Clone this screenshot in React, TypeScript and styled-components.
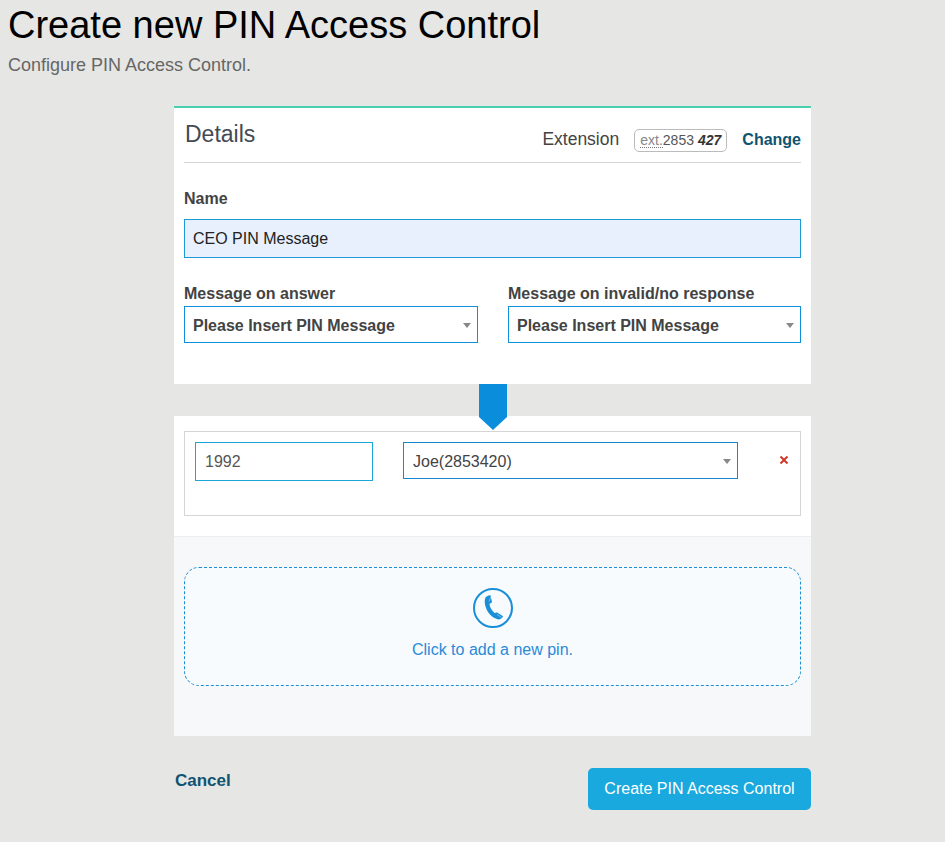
import { createGlobalStyle } from "styled-components";
import styled from "styled-components";

const GlobalStyle = createGlobalStyle`
  html, body {
    margin: 0;
    padding: 0;
    background: #e6e6e4;
    font-family: "Liberation Sans", Arial, sans-serif;
  }
`;

const Page = styled.div`
  width: 945px;
  height: 842px;
  overflow: hidden;
`;

const Header = styled.div`
  padding: 3px 8px 0;
`;

const Title = styled.h1`
  margin: 0;
  font-size: 38px;
  font-weight: 400;
  line-height: 44px;
  color: #000;
`;

const Subtitle = styled.p`
  margin: 8px 0 0;
  font-size: 18px;
  line-height: 21px;
  color: #666;
`;

const Column = styled.div`
  width: 637px;
  margin: 30px 0 0 174px;
`;

const DetailsCard = styled.section`
  height: 276px;
  padding: 0 10px;
  background: #fff;
  border-top: 2px solid #48cfae;
`;

const DetailsHead = styled.div`
  display: flex;
  align-items: center;
  justify-content: space-between;
  height: 54px;
  border-bottom: 1px solid #d5d5d5;
`;

const DetailsTitle = styled.h2`
  margin: 0 0 1px 1px;
  font-size: 23px;
  font-weight: 400;
  color: #434a54;
`;

const ExtensionGroup = styled.div`
  display: flex;
  align-items: center;
  margin-top: 9px;
`;

const ExtensionLabel = styled.span`
  font-size: 17.5px;
  color: #434343;
`;

const ExtensionBadge = styled.span`
  display: inline-flex;
  align-items: center;
  box-sizing: border-box;
  height: 23px;
  margin: 0 0 -1px 15px;
  padding: 0 5px 0 5px;
  border: 1px solid #bbb;
  border-radius: 5px;
  font-size: 14px;
  color: #555;
`;

const ExtPrefix = styled.span`
  color: #888;
  border-bottom: 1px dotted #777;
  line-height: 14px;
`;

const ExtNumber = styled.b`
  margin-left: 4px;
  font-style: italic;
  color: #333;
`;

const ChangeLink = styled.a`
  margin-left: 15px;
  font-size: 16px;
  font-weight: 700;
  color: #0f5470;
`;

const Field = styled.div`
  min-width: 0;
`;

const NameField = styled(Field)`
  margin-top: 27px;
`;

const Label = styled.label`
  display: block;
  font-size: 16px;
  font-weight: 700;
  line-height: 18px;
  color: #434343;
`;

const NameInput = styled.input`
  display: block;
  box-sizing: border-box;
  width: 100%;
  height: 39px;
  margin-top: 11px;
  padding: 0 8px;
  border: 1px solid #1c9ad6;
  border-radius: 0;
  outline: none;
  background: #e8f0fe;
  font: 16px "Liberation Sans", Arial, sans-serif;
  color: #222;
`;

const MessageRow = styled.div`
  display: grid;
  grid-template-columns: 294px 293px;
  column-gap: 30px;
  margin-top: 27px;
`;

const SelectBox = styled.div<{ $bold?: boolean; $height: number }>`
  display: flex;
  align-items: center;
  justify-content: space-between;
  box-sizing: border-box;
  height: ${(p) => p.$height}px;
  padding: 2px 6px 0 8px;
  border: 1px solid #0f8fdc;
  background: #fff;
  font-size: 16px;
  font-weight: ${(p) => (p.$bold ? 700 : 400)};
  color: #434343;
`;

const MessageSelect = styled(SelectBox)`
  margin-top: 3px;
`;

const Caret = styled.span`
  width: 0;
  height: 0;
  border-left: 4px solid transparent;
  border-right: 4px solid transparent;
  border-top: 5px solid #888;
`;

const PinsCard = styled.section`
  position: relative;
  margin-top: 32px;
  background: #fff;
`;

const Connector = styled.svg`
  position: absolute;
  left: 305px;
  top: -32px;
  display: block;
`;

const PinsList = styled.div`
  height: 120px;
  box-sizing: border-box;
  padding: 15px 10px 0;
`;

const PinRow = styled.div`
  display: flex;
  align-items: flex-start;
  box-sizing: border-box;
  height: 85px;
  padding: 10px 0 0 10px;
  border: 1px solid #d5d5d5;
`;

const PinInput = styled.input`
  display: block;
  box-sizing: border-box;
  width: 178px;
  height: 39px;
  padding: 0 9px;
  border: 1px solid #1ea5d8;
  border-radius: 0;
  outline: none;
  font: 16px "Liberation Sans", Arial, sans-serif;
  color: #555;
`;

const PinSelect = styled(SelectBox)`
  width: 335px;
  margin-left: 30px;
  padding-left: 9px;
  border-color: #1a86cf;
`;

const RemoveButton = styled.svg`
  margin: 13px 0 0 41px;
  display: block;
`;

const AddArea = styled.div`
  height: 200px;
  box-sizing: border-box;
  padding: 30px 10px 0;
  background: #f6f8f9;
  border-top: 1px solid #eceef0;
`;

const AddPin = styled.div`
  display: flex;
  flex-direction: column;
  align-items: center;
  box-sizing: border-box;
  height: 119px;
  padding-top: 20px;
  border: 1px dashed #1a8fd8;
  border-radius: 15px;
  background: #f7fbfe;
`;

const AddText = styled.span`
  margin-top: 11px;
  font-size: 16px;
  line-height: 22px;
  color: #2a8ad9;
`;

const Footer = styled.div`
  display: flex;
  align-items: flex-start;
  justify-content: space-between;
  margin-top: 32px;
`;

const CancelLink = styled.a`
  margin: 3px 0 0 1px;
  font-size: 17px;
  font-weight: 700;
  line-height: 19px;
  color: #0f5470;
`;

const CreateButton = styled.button`
  box-sizing: border-box;
  width: 223px;
  height: 42px;
  padding: 0;
  border: none;
  border-radius: 5px;
  background: #1aa9de;
  font: 16px "Liberation Sans", Arial, sans-serif;
  color: #fff;
`;

export default function App() {
  return (
    <Page>
      <GlobalStyle />
      <Header>
        <Title>Create new PIN Access Control</Title>
        <Subtitle>Configure PIN Access Control.</Subtitle>
      </Header>
      <Column>
        <DetailsCard>
          <DetailsHead>
            <DetailsTitle>Details</DetailsTitle>
            <ExtensionGroup>
              <ExtensionLabel>Extension</ExtensionLabel>
              <ExtensionBadge>
                <ExtPrefix>ext.</ExtPrefix>2853<ExtNumber>427</ExtNumber>
              </ExtensionBadge>
              <ChangeLink>Change</ChangeLink>
            </ExtensionGroup>
          </DetailsHead>
          <NameField>
            <Label>Name</Label>
            <NameInput readOnly value="CEO PIN Message" />
          </NameField>
          <MessageRow>
            <Field>
              <Label>Message on answer</Label>
              <MessageSelect $bold $height={37}>
                Please Insert PIN Message
                <Caret />
              </MessageSelect>
            </Field>
            <Field>
              <Label>Message on invalid/no response</Label>
              <MessageSelect $bold $height={37}>
                Please Insert PIN Message
                <Caret />
              </MessageSelect>
            </Field>
          </MessageRow>
        </DetailsCard>
        <PinsCard>
          <Connector width="28" height="46" viewBox="0 0 28 46">
            <path d="M0 0H28V33L14 46L0 33Z" fill="#0a8edb" />
          </Connector>
          <PinsList>
            <PinRow>
              <PinInput readOnly value="1992" />
              <PinSelect $height={37}>
                Joe(2853420)
                <Caret />
              </PinSelect>
              <RemoveButton width="10" height="10" viewBox="0 0 10 10">
                <path d="M1.5 1.5L8.5 8.5M8.5 1.5L1.5 8.5" stroke="#d0392b" strokeWidth="2" />
              </RemoveButton>
            </PinRow>
          </PinsList>
          <AddArea>
            <AddPin>
              <svg width="40" height="40" viewBox="0 0 40 40">
                <circle cx="20" cy="20" r="19" fill="none" stroke="#1a8fd8" strokeWidth="2" />
                <path
                  d="M12.5 9.5C13.5 8 15.5 7 17.5 7.2L19 14C18.5 15 17 15.5 16.5 15.6C16.5 19 18.5 22.5 21.5 25C22.5 24.5 23.5 24.3 24.2 24.5L30 28.3C29.5 30 27.5 31.4 26 31.4C22 31.4 16 27 13.4 21C11.5 16.5 11.2 12 12.5 9.5Z"
                  fill="#1a8fd8"
                />
                <path d="M16 13.5L18 8.5M24 26.4L28.4 29.4" stroke="#f7fbfe" strokeWidth="0.4" fill="none" />
              </svg>
              <AddText>Click to add a new pin.</AddText>
            </AddPin>
          </AddArea>
        </PinsCard>
        <Footer>
          <CancelLink>Cancel</CancelLink>
          <CreateButton>Create PIN Access Control</CreateButton>
        </Footer>
      </Column>
    </Page>
  );
}
